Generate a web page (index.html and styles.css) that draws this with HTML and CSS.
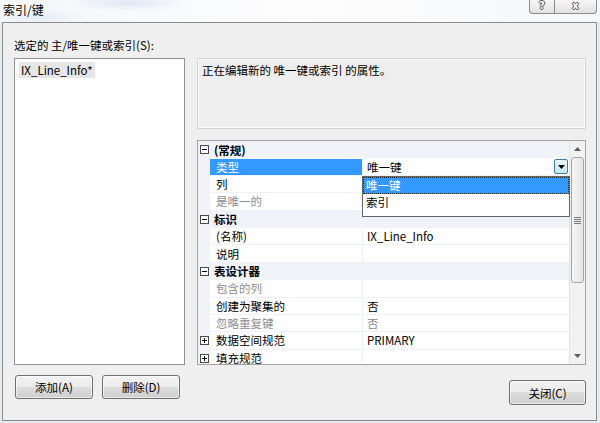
FILE: index.html
```html
<!DOCTYPE html>
<html lang="zh-CN">
<head>
    <meta charset="UTF-8">
    <title>索引/键</title>
    <link rel="stylesheet" href="styles.css">
</head>
<body>
    <div class="titlebar">
        <span class="title">索引/键</span>
        <div class="caption-btns">
            <span class="cap help">?</span>
            <span class="cap close">x</span>
        </div>
    </div>

    <div class="client">
        <!-- left: key list -->
        <div class="left">
            <div class="label">选定的 主/唯一键或索引(S):</div>
            <div class="listbox">
                <div class="item">IX_Line_Info*</div>
            </div>
            <div class="left-btns">
                <button class="btn">添加(A)</button>
                <button class="btn">删除(D)</button>
            </div>
        </div>

        <!-- right: description + property grid -->
        <div class="right">
            <div class="desc">正在编辑新的 唯一键或索引 的属性。</div>

            <div class="grid">
                <div class="rows">
                    <div class="row cat">
                        <span class="gutter"><svg width="9" height="9"><rect x="0.5" y="0.5" width="8" height="8" fill="#fff" stroke="#4a4a4a"/><path d="M2 4.5h5" stroke="#000"/></svg></span>
                        <span class="cat-name">(常规)</span>
                    </div>
                    <div class="row">
                        <span class="gutter"></span>
                        <span class="name selected">类型</span>
                        <span class="val">唯一键<span class="dd-btn"><svg width="7" height="4"><path d="M0 0h7L3.5 4z" fill="#000"/></svg></span></span>
                    </div>
                    <div class="row">
                        <span class="gutter"></span>
                        <span class="name">列</span>
                        <span class="val"></span>
                    </div>
                    <div class="row">
                        <span class="gutter"></span>
                        <span class="name dim">是唯一的</span>
                        <span class="val"></span>
                    </div>
                    <div class="row cat">
                        <span class="gutter"><svg width="9" height="9"><rect x="0.5" y="0.5" width="8" height="8" fill="#fff" stroke="#4a4a4a"/><path d="M2 4.5h5" stroke="#000"/></svg></span>
                        <span class="cat-name">标识</span>
                    </div>
                    <div class="row">
                        <span class="gutter"></span>
                        <span class="name">(名称)</span>
                        <span class="val">IX_Line_Info</span>
                    </div>
                    <div class="row">
                        <span class="gutter"></span>
                        <span class="name">说明</span>
                        <span class="val"></span>
                    </div>
                    <div class="row cat">
                        <span class="gutter"><svg width="9" height="9"><rect x="0.5" y="0.5" width="8" height="8" fill="#fff" stroke="#4a4a4a"/><path d="M2 4.5h5" stroke="#000"/></svg></span>
                        <span class="cat-name">表设计器</span>
                    </div>
                    <div class="row">
                        <span class="gutter"></span>
                        <span class="name dim">包含的列</span>
                        <span class="val"></span>
                    </div>
                    <div class="row">
                        <span class="gutter"></span>
                        <span class="name">创建为聚集的</span>
                        <span class="val">否</span>
                    </div>
                    <div class="row">
                        <span class="gutter"></span>
                        <span class="name dim">忽略重复键</span>
                        <span class="val dim">否</span>
                    </div>
                    <div class="row">
                        <span class="gutter"><svg width="9" height="9"><rect x="0.5" y="0.5" width="8" height="8" fill="#fff" stroke="#4a4a4a"/><path d="M2 4.5h5M4.5 2v5" stroke="#000"/></svg></span>
                        <span class="name">数据空间规范</span>
                        <span class="val">PRIMARY</span>
                    </div>
                    <div class="row">
                        <span class="gutter"><svg width="9" height="9"><rect x="0.5" y="0.5" width="8" height="8" fill="#fff" stroke="#4a4a4a"/><path d="M2 4.5h5M4.5 2v5" stroke="#000"/></svg></span>
                        <span class="name">填充规范</span>
                        <span class="val"></span>
                    </div>
                </div>

                <div class="scroll">
                    <span class="arrow"><svg width="7" height="4"><path d="M0 4h7L3.5 0z" fill="#606060"/></svg></span>
                    <span class="thumb"><span class="grip"></span></span>
                    <span class="track"></span>
                    <span class="arrow"><svg width="7" height="4"><path d="M0 0h7L3.5 4z" fill="#606060"/></svg></span>
                </div>

                <!-- open combo list -->
                <div class="dropdown">
                    <div class="opt active">唯一键</div>
                    <div class="opt">索引</div>
                </div>
            </div>

            <div class="right-btns">
                <button class="btn close-btn">关闭(C)</button>
            </div>
        </div>
    </div>
</body>
</html>
```

FILE: styles.css
```css
* {
    margin: 0;
    padding: 0;
    box-sizing: border-box;
}

body {
    width: 600px;
    height: 423px;
    overflow: hidden;
    background: #e6ebf0;
    font-family: "Noto Sans CJK SC", "Noto Sans", sans-serif;
    font-size: 11.5px;
    color: #000;
}

/* title bar */
.titlebar {
    height: 22px;
    display: flex;
    justify-content: space-between;
    align-items: flex-start;
    padding-left: 3px;
    background:
        radial-gradient(ellipse 60px 8px at 130px 3px, rgba(160, 190, 235, 0.3), transparent),
        radial-gradient(ellipse 50px 7px at 40px 17px, rgba(160, 190, 235, 0.2), transparent),
        linear-gradient(90deg, #f4f6f8, #fdfdfe 50%, #f6f7f8);
}
.title {
    line-height: 20px;
    font-size: 12px;
}
.caption-btns {
    display: flex;
    margin-right: 3px;
}
.cap {
    height: 14px;
    border: 1px solid #8c8c8c;
    border-top: none;
    background: linear-gradient(#f6f6f6, #e2e2e2);
    color: #fff;
    font-family: "DejaVu Sans", sans-serif;
    font-size: 10px;
    font-weight: bold;
    line-height: 12px;
    text-align: center;
    text-shadow: 1px 0 #555, -1px 0 #555, 0 1px #555, 0 -1px #555;
}
.help {
    width: 26px;
    border-radius: 0 0 0 4px;
}
.close {
    width: 42px;
    border-left: none;
    border-radius: 0 0 4px 0;
}

/* dialog body */
.client {
    height: 399px;
    margin: 0 3px 0 2px;
    border: 1px solid #8b8b8b;
    background: #efefef;
    display: flex;
    gap: 12px;
    padding: 15px 10px 0 11px;
}

.left {
    width: 171px;
    display: flex;
    flex-direction: column;
}
.label {
    line-height: 14px;
}
.listbox {
    margin-top: 6px;
    height: 307px;
    background: #fff;
    border: 1px solid #8e9196;
    padding: 3px 4px;
}
.item {
    display: inline-block;
    background: #e6e6e6;
    padding: 0 2px;
    line-height: 16px;
}
.left-btns {
    margin-top: 10px;
    display: flex;
    gap: 9px;
    padding-left: 1px;
}

.btn {
    width: 78px;
    height: 24px;
    border: 1px solid #707070;
    border-radius: 3px;
    background: linear-gradient(#f2f2f2, #ebebeb 50%, #dddddd 50%, #cfcfcf);
    font-family: inherit;
    font-size: 11.5px;
    color: #000;
    box-shadow: inset 0 0 0 1px rgba(255, 255, 255, 0.6);
}

.right {
    width: 389px;
    margin-top: 20px;
    display: flex;
    flex-direction: column;
}
.desc {
    height: 71px;
    border: 1px solid #d4d4d4;
    box-shadow: inset 0 0 0 1px #fafafa;
    background: #eeeeee;
    padding: 3px 4px;
    line-height: 16px;
}

/* property grid */
.grid {
    position: relative;
    margin-top: 11px;
    height: 225px;
    border: 1px solid #a3a3a3;
    display: flex;
    overflow: hidden;
    background: #fff;
}
.rows {
    flex: 1;
}
.row {
    display: flex;
    height: 17.4px;
    line-height: 16px;
}
.gutter {
    width: 12px;
    flex: none;
    background: #f0f3f8;
    display: flex;
    align-items: center;
    justify-content: center;
    padding-left: 1px;
}
.row.cat {
    background: #f0f3f8;
}
.cat-name {
    font-weight: bold;
    padding-left: 4px;
    display: flex;
    align-items: center;
}
.name {
    width: 153px;
    flex: none;
    padding-left: 6px;
    border-bottom: 1px solid #eef1f6;
    border-right: 1px solid #eef1f6;
    display: flex;
    align-items: center;
}
.name.selected {
    background: #3399ff;
    color: #fff;
    border-top: 1px solid #fff;
}
.val {
    flex: 1;
    padding-left: 4px;
    border-bottom: 1px solid #eef1f6;
    display: flex;
    align-items: center;
}
.dim {
    color: #8d8d8d;
}
.dd-btn {
    margin-left: auto;
    margin-right: 1px;
    width: 14px;
    height: 15px;
    border: 1px solid #3c7fb1;
    border-radius: 2px;
    background: linear-gradient(#eaf6fd, #c4e5f6);
    display: flex;
    align-items: center;
    justify-content: center;
}

.scroll {
    width: 16px;
    flex: none;
    background: #f1f1f1;
    border-left: 1px solid #e4e4e4;
    display: flex;
    flex-direction: column;
}
.arrow {
    height: 16px;
    display: flex;
    align-items: center;
    justify-content: center;
}
.thumb {
    height: 126px;
    margin: 0 1px;
    border: 1px solid #a5a5a5;
    border-radius: 3px;
    background: linear-gradient(90deg, #f5f5f5, #e6e6e6);
    display: flex;
    align-items: center;
    justify-content: center;
}
.grip {
    width: 7px;
    height: 7px;
    background: repeating-linear-gradient(#7a7a7a 0 1px, transparent 1px 2px);
}
.track {
    flex: 1;
}

.dropdown {
    position: absolute;
    left: 164px;
    top: 35px;
    width: 208px;
    height: 41px;
    background: #fff;
    border: 1px solid #646464;
}
.opt {
    height: 17px;
    line-height: 16px;
    padding-left: 3px;
}
.opt.active {
    background: #3399ff;
    color: #fff;
    outline: 1px dotted #222;
    outline-offset: -1px;
}

.right-btns {
    margin-top: 15px;
    display: flex;
    justify-content: flex-end;
}
.close-btn {
    width: 77px;
    height: 25px;
}
```
